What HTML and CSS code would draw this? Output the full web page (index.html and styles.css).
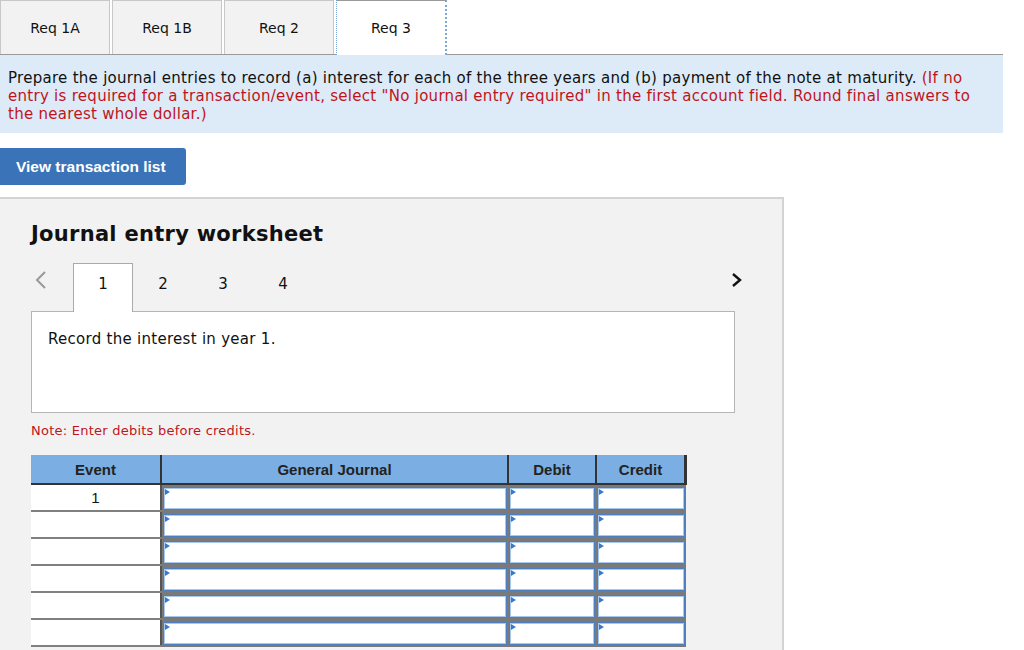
FILE: index.html
```html
<!DOCTYPE html>
<html lang="en">
<head>
  <meta charset="UTF-8">
  <title>Journal entry worksheet</title>
  <link rel="stylesheet" href="styles.css">
</head>
<body>
  <div class="tabs">
    <div class="tab">Req 1A</div>
    <div class="tab">Req 1B</div>
    <div class="tab">Req 2</div>
    <div class="tab active">Req 3</div>
  </div>

  <div class="instructions">
    Prepare the journal entries to record (a) interest for each of the three years and (b) payment of the note at maturity.
    <span class="red">(If no entry is required for a transaction/event, select "No journal entry required" in the first account field. Round final answers to the nearest whole dollar.)</span>
  </div>

  <button class="view-btn">View transaction list</button>

  <div class="worksheet">
    <h2 class="ws-title">Journal entry worksheet</h2>

    <div class="steps">
      <span class="arrow prev">
        <svg width="12" height="18" viewBox="0 0 12 18"><path d="M10 1 L2 9 L10 17" fill="none" stroke="#999" stroke-width="2"/></svg>
      </span>
      <span class="step current">1</span>
      <span class="step">2</span>
      <span class="step">3</span>
      <span class="step">4</span>
      <span class="arrow next">
        <svg width="12" height="18" viewBox="0 0 12 18"><path d="M2 3 L9 9 L2 15" fill="none" stroke="#111" stroke-width="2.4"/></svg>
      </span>
    </div>

    <div class="step-box">Record the interest in year 1.</div>

    <p class="note">Note: Enter debits before credits.</p>

    <table class="journal">
      <thead>
        <tr>
          <th class="c-event">Event</th>
          <th class="c-account">General Journal</th>
          <th class="c-debit">Debit</th>
          <th class="c-credit">Credit</th>
        </tr>
      </thead>
      <tbody>
        <tr>
          <td class="event">1</td>
          <td><div class="field"></div></td>
          <td><div class="field"></div></td>
          <td><div class="field"></div></td>
        </tr>
        <tr>
          <td class="event"></td>
          <td><div class="field"></div></td>
          <td><div class="field"></div></td>
          <td><div class="field"></div></td>
        </tr>
        <tr>
          <td class="event"></td>
          <td><div class="field"></div></td>
          <td><div class="field"></div></td>
          <td><div class="field"></div></td>
        </tr>
        <tr>
          <td class="event"></td>
          <td><div class="field"></div></td>
          <td><div class="field"></div></td>
          <td><div class="field"></div></td>
        </tr>
        <tr>
          <td class="event"></td>
          <td><div class="field"></div></td>
          <td><div class="field"></div></td>
          <td><div class="field"></div></td>
        </tr>
        <tr>
          <td class="event"></td>
          <td><div class="field"></div></td>
          <td><div class="field"></div></td>
          <td><div class="field"></div></td>
        </tr>
      </tbody>
    </table>
  </div>
</body>
</html>
```

FILE: styles.css
```css
body {
    margin: 0;
    font-family: Verdana, "DejaVu Sans", sans-serif;
    letter-spacing: 0.28px;
    color: #111;
    background: #fff;
}

/* tabs */
.tabs {
    display: flex;
    gap: 2px;
    width: 1003px;
    height: 54px;
    border-bottom: 1px solid #999;
}
.tab {
    width: 108px;
    display: flex;
    align-items: center;
    justify-content: center;
    font-size: 14px;
    letter-spacing: 0;
    background: #f2f2f2;
    border: 1px solid #c8c8c8;
    border-bottom: none;
}
.tab.active {
    background: #fff;
    height: 53px;
    padding-bottom: 1px;
    border-color: #999;
    border-right: 2px dotted #7aa6d9;
    border-left: 1px dotted #7aa6d9;
    position: relative;
    z-index: 1;
}

/* instructions */
.instructions {
    width: 987px;
    padding: 14px 8px 10px;
    background: #dcebf7;
    font-size: 15px;
    line-height: 18px;
}
.red {
    color: #c0141c;
}

.view-btn {
    display: block;
    margin-top: 15px;
    width: 186px;
    height: 37px;
    padding: 0 0 0 16px;
    text-align: left;
    border: none;
    border-radius: 0 3px 3px 0;
    background: #3b73b9;
    color: #fff;
    font-family: "Liberation Sans", Arial, sans-serif;
    font-weight: bold;
    font-size: 15.5px;
}

/* worksheet panel */
.worksheet {
    margin-top: 12px;
    width: 751px;
    height: 460px;
    padding: 0 0 0 31px;
    background: #f2f2f2;
    border-top: 2px solid #d3d3d3;
    border-right: 2px solid #d3d3d3;
}
.ws-title {
    margin: 0;
    padding-top: 21px;
    font-size: 21px;
    font-weight: bold;
    line-height: 28px;
}

.steps {
    display: flex;
    align-items: flex-end;
    height: 48px;
    margin-top: 15px;
    width: 704px;
    position: relative;
}
.arrow {
    position: absolute;
    top: 8px;
}
.arrow.prev {
    left: 4px;
}
.arrow.next {
    right: -8px;
}
.step {
    width: 60px;
    height: 48px;
    box-sizing: border-box;
    text-align: center;
    font-size: 15px;
    letter-spacing: 0;
    line-height: 42px;
}
.steps .current {
    margin-left: 42px;
    width: 60px;
    height: 49px;
    margin-bottom: -1px;
    background: #fff;
    border: 1px solid #aaa;
    border-bottom: none;
    line-height: 40px;
    position: relative;
    z-index: 1;
}

.step-box {
    width: 704px;
    height: 102px;
    box-sizing: border-box;
    padding: 18px 0 0 16px;
    background: #fff;
    border: 1px solid #b5b5b5;
    font-size: 15px;
}

.note {
    margin: 10px 0 0;
    color: #c0141c;
    font-size: 13px;
    letter-spacing: 0.24px;
}

/* journal table */
.journal {
    margin-top: 17px;
    border-collapse: collapse;
    font-family: "Liberation Sans", Arial, sans-serif;
    letter-spacing: 0;
}
.journal th {
    height: 28px;
    padding: 0;
    background: #7bafe3;
    color: #222;
    font-size: 15px;
    border-right: 2px solid #333;
    border-bottom: 2px solid #333;
}
.journal th:last-child {
    border-right: 3px solid #333;
}
.c-event { width: 129px; }
.c-account { width: 345px; }
.c-debit { width: 86px; }
.c-credit { width: 87px; }

.journal td {
    height: 25px;
    padding: 0;
    background: #7a7a7a;
    border-bottom: 2px solid #7a7a7a;
}
.journal td.event {
    background: #fff;
    text-align: center;
    font-size: 15px;
    vertical-align: top;
    padding-top: 4px;
    height: 21px;
    border-bottom: 2px solid #808080;
    border-right: 2px solid #555;
}
.field {
    position: relative;
    height: 21px;
    margin: 2px 1px 0 1px;
    background: #fff;
    border: 1px solid #4d7fc0;
    box-shadow: inset 0 0 0 1px #a9c8ee;
}
.field::before {
    content: "";
    position: absolute;
    top: 1px;
    left: 1px;
    border-left: 5px solid #3a79c9;
    border-top: 3px solid transparent;
    border-bottom: 3px solid transparent;
}
```
